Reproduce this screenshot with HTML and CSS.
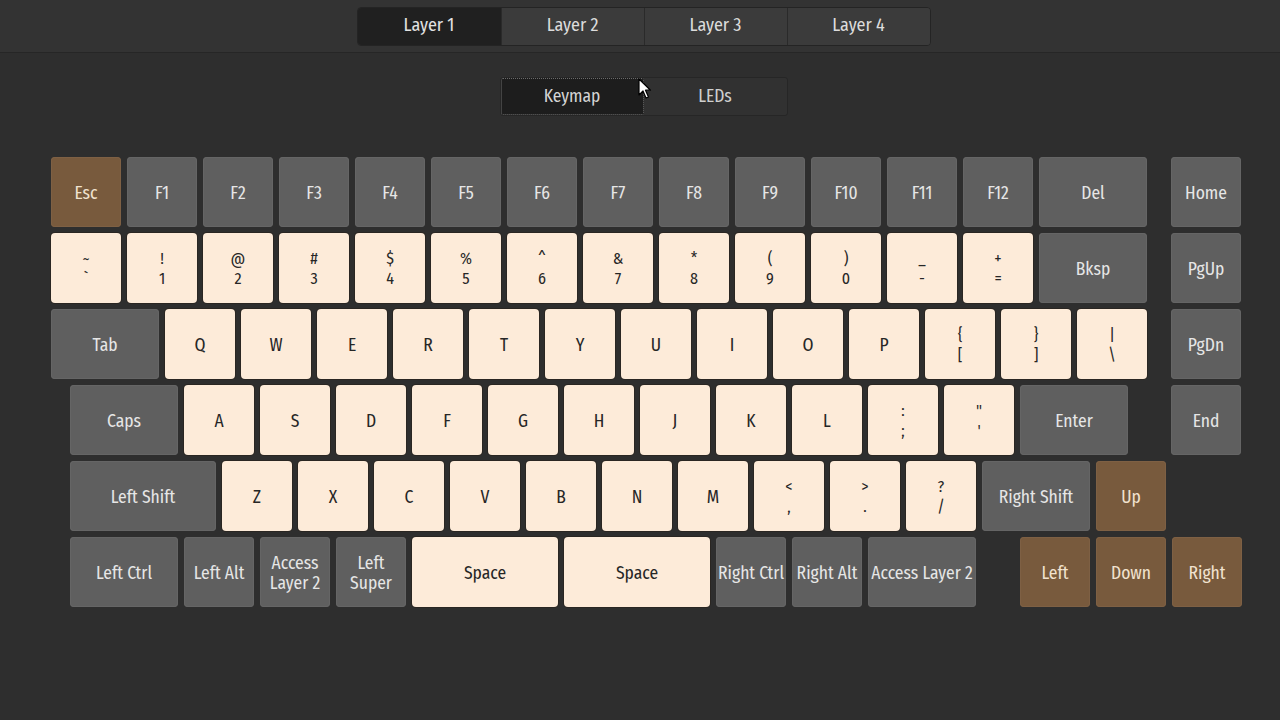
FILE: index.html
```html
<!DOCTYPE html>
<html>
<head>
<meta charset="utf-8">
<link rel="stylesheet" href="styles.css">
</head>
<body>
<header class="topbar">
  <div class="tabs">
    <div class="tab active">Layer 1</div>
    <div class="tab">Layer 2</div>
    <div class="tab">Layer 3</div>
    <div class="tab">Layer 4</div>
  </div>
</header>
<div class="modebar">
  <div class="toggle">
    <div class="mode active">Keymap</div>
    <div class="mode">LEDs</div>
  </div>
</div>
<main class="keyboard">
  <div class="row">
    <div class="key brown">Esc</div>
    <div class="key gray">F1</div>
    <div class="key gray">F2</div>
    <div class="key gray">F3</div>
    <div class="key gray">F4</div>
    <div class="key gray">F5</div>
    <div class="key gray">F6</div>
    <div class="key gray">F7</div>
    <div class="key gray">F8</div>
    <div class="key gray">F9</div>
    <div class="key gray">F10</div>
    <div class="key gray">F11</div>
    <div class="key gray">F12</div>
    <div class="key gray u15">Del</div>
    <div class="key gray nav">Home</div>
  </div>
  <div class="row">
    <div class="key cream two"><span>~</span><span>`</span></div>
    <div class="key cream two"><span>!</span><span>1</span></div>
    <div class="key cream two"><span>@</span><span>2</span></div>
    <div class="key cream two"><span>#</span><span>3</span></div>
    <div class="key cream two"><span>$</span><span>4</span></div>
    <div class="key cream two"><span>%</span><span>5</span></div>
    <div class="key cream two"><span>^</span><span>6</span></div>
    <div class="key cream two"><span>&amp;</span><span>7</span></div>
    <div class="key cream two"><span>*</span><span>8</span></div>
    <div class="key cream two"><span>(</span><span>9</span></div>
    <div class="key cream two"><span>)</span><span>0</span></div>
    <div class="key cream two"><span>_</span><span>-</span></div>
    <div class="key cream two"><span>+</span><span>=</span></div>
    <div class="key gray u15">Bksp</div>
    <div class="key gray nav">PgUp</div>
  </div>
  <div class="row">
    <div class="key gray u15">Tab</div>
    <div class="key cream">Q</div>
    <div class="key cream">W</div>
    <div class="key cream">E</div>
    <div class="key cream">R</div>
    <div class="key cream">T</div>
    <div class="key cream">Y</div>
    <div class="key cream">U</div>
    <div class="key cream">I</div>
    <div class="key cream">O</div>
    <div class="key cream">P</div>
    <div class="key cream two"><span>{</span><span>[</span></div>
    <div class="key cream two"><span>}</span><span>]</span></div>
    <div class="key cream two"><span>|</span><span>\</span></div>
    <div class="key gray nav">PgDn</div>
  </div>
  <div class="row">
    <div class="key gray u15 indent">Caps</div>
    <div class="key cream">A</div>
    <div class="key cream">S</div>
    <div class="key cream">D</div>
    <div class="key cream">F</div>
    <div class="key cream">G</div>
    <div class="key cream">H</div>
    <div class="key cream">J</div>
    <div class="key cream">K</div>
    <div class="key cream">L</div>
    <div class="key cream two"><span>:</span><span>;</span></div>
    <div class="key cream two"><span>"</span><span>'</span></div>
    <div class="key gray u15">Enter</div>
    <div class="key gray nav-end">End</div>
  </div>
  <div class="row">
    <div class="key gray u2 indent">Left Shift</div>
    <div class="key cream">Z</div>
    <div class="key cream">X</div>
    <div class="key cream">C</div>
    <div class="key cream">V</div>
    <div class="key cream">B</div>
    <div class="key cream">N</div>
    <div class="key cream">M</div>
    <div class="key cream two"><span>&lt;</span><span>,</span></div>
    <div class="key cream two"><span>&gt;</span><span>.</span></div>
    <div class="key cream two"><span>?</span><span>/</span></div>
    <div class="key gray u15">Right Shift</div>
    <div class="key brown">Up</div>
  </div>
  <div class="row">
    <div class="key gray u15 indent">Left Ctrl</div>
    <div class="key gray">Left Alt</div>
    <div class="key gray wrap">Access Layer 2</div>
    <div class="key gray wrap">Left Super</div>
    <div class="key cream u2">Space</div>
    <div class="key cream u2">Space</div>
    <div class="key gray">Right Ctrl</div>
    <div class="key gray">Right Alt</div>
    <div class="key gray u15">Access Layer 2</div>
    <div class="key brown arrows">Left</div>
    <div class="key brown">Down</div>
    <div class="key brown">Right</div>
  </div>
</main>
<svg class="cursor" width="14" height="22" viewBox="0 0 14 22">
  <path d="M1 1 L1 17 L5 13 L8 20 L10.5 19 L7.5 12.2 L12.5 12.2 Z" fill="#ffffff" stroke="#000000" stroke-width="1.2" stroke-linejoin="round"/>
</svg>
</body>
</html>
```

FILE: styles.css
```css
* { box-sizing: border-box; }

html, body {
  margin: 0;
  padding: 0;
  width: 1280px;
  height: 720px;
  overflow: hidden;
}

body {
  position: relative;
  background: #2e2e2e;
  font-family: "Fira Sans Condensed", "Liberation Sans Narrow", "Open Sans", "Noto Sans", sans-serif;
  color: #e4e4e4;
}

.topbar {
  height: 53px;
  background: #333333;
  border-bottom: 1px solid #262626;
  display: flex;
  justify-content: center;
  align-items: flex-start;
  padding-top: 7px;
  padding-left: 7px;
}

.tabs {
  display: flex;
  border: 1px solid #242424;
  border-radius: 4px;
  overflow: hidden;
  background: #3a3a3a;
}

.tab {
  width: 143px;
  height: 37px;
  display: flex;
  align-items: center;
  justify-content: center;
  font-size: 18px;
  color: #dcdcdc;
  background: #3b3b3b;
  border-left: 1px solid #2a2a2a;
  padding-bottom: 4px;
}

.tab:first-child { border-left: none; }

.tab.active {
  background: #202020;
  color: #e2e2e2;
}

.modebar {
  display: flex;
  justify-content: center;
  padding-top: 24px;
  padding-left: 7px;
}

.toggle {
  display: flex;
  border: 1px solid #262626;
  border-radius: 3px;
  background: #313131;
}

.mode {
  width: 143px;
  height: 37px;
  display: flex;
  align-items: center;
  justify-content: center;
  font-size: 17.5px;
  color: #cfcfcf;
}

.mode.active {
  background: #1d1d1d;
  outline: 1px dotted #6a6a6a;
  outline-offset: -1px;
  border-radius: 2px;
  color: #d4d4d4;
}

.keyboard {
  padding: 41px 0 0 51px;
  display: flex;
  flex-direction: column;
  gap: 6px;
}

.row {
  display: flex;
  gap: 6px;
}

.key {
  width: 70px;
  height: 70px;
  border-radius: 4px;
  display: flex;
  align-items: center;
  justify-content: center;
  font-size: 17.5px;
  text-align: center;
  line-height: 20px;
  flex: none;
  padding-top: 3px;
}

.key.u15 { width: 108px; }
.key.u2 { width: 146px; }
.key.indent { margin-left: 19px; }
.key.nav { margin-left: 18px; }
.key.nav-end { margin-left: 37px; }
.key.arrows { margin-left: 38px; }

.key.gray {
  background: #5f5f5f;
  color: #e6e6e6;
  box-shadow: inset 0 0 0 1px #656565;
}

.key.brown {
  background: #785a3d;
  color: #f1e2cf;
  box-shadow: inset 0 0 0 1px #7e6044;
}

.key.cream {
  background: #fdebd9;
  color: #262626;
  box-shadow: 0 0 0 1px #2a2622;
}

.key.two {
  flex-direction: column;
  font-size: 16px;
  line-height: 20px;
  padding-top: 2px;
}

.key.wrap {
  padding: 3px 5px 0;
  line-height: 20px;
}

.cursor {
  position: absolute;
  left: 638px;
  top: 78px;
}
```
